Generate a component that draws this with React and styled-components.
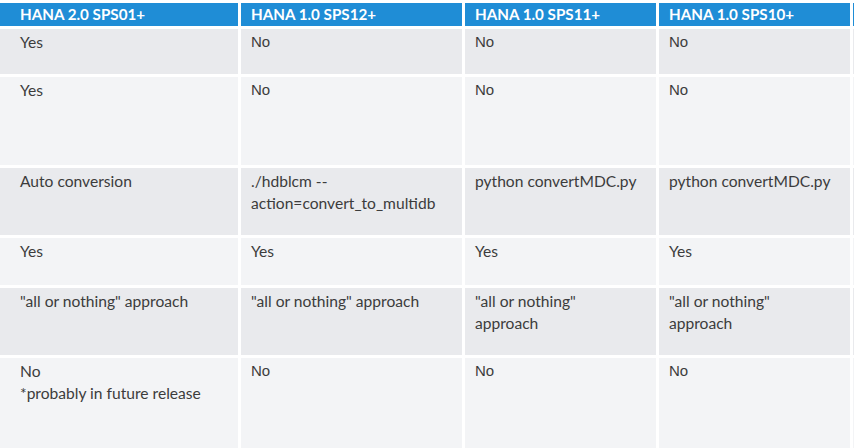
import styled, { createGlobalStyle } from 'styled-components'

const GlobalStyle = createGlobalStyle`
  html, body {
    margin: 0;
    padding: 0;
    background: #ffffff;
  }
`

const Grid = styled.div`
  display: grid;
  grid-template-columns: 7px 228px 221px 191px 191px 1fr;
  grid-template-rows: 23px 45px 88px 67px 47px 67px 90px;
  gap: 3px;
  padding-top: 3px;
  width: 854px;
  height: 448px;
  overflow: hidden;
  box-sizing: border-box;
  font-family: Lato, 'Open Sans', sans-serif;
`

const HeadCell = styled.div`
  background: #1f8dd6;
  color: #ffffff;
  font-weight: bold;
  font-size: 15.2px;
  line-height: 23px;
  padding-left: 10px;
  white-space: nowrap;
  overflow: hidden;
`

const Cell = styled.div`
  background: ${(p) => (p.$odd ? '#e9eaed' : '#f3f4f6')};
  color: #3c3c3c;
  font-family: ${(p) => (p.$arial ? "'Liberation Sans', Arial, sans-serif" : "Lato, 'Open Sans', sans-serif")};
  font-size: ${(p) => (p.$arial ? '15px' : '15.6px')};
  line-height: 22px;
  padding: 2px 6px 0 10px;
  overflow: hidden;
`

const headers = ['', 'HANA 2.0 SPS01+', 'HANA 1.0 SPS12+', 'HANA 1.0 SPS11+', 'HANA 1.0 SPS10+', '']

const A = (text) => ({ text, arial: true })

const rows = [
  ['Yes', A('No'), A('No'), A('No')],
  ['Yes', A('No'), A('No'), A('No')],
  ['Auto conversion', './hdblcm --\naction=convert_to_multidb', 'python convertMDC.py', 'python convertMDC.py'],
  ['Yes', 'Yes', 'Yes', 'Yes'],
  ['"all or nothing" approach', '"all or nothing" approach', '"all or nothing"\napproach', '"all or nothing"\napproach'],
  ['No\n*probably in future release', A('No'), A('No'), A('No')],
]

const Lines = ({ text }) =>
  text.split('\n').map((line, i) => <div key={i}>{line}</div>)

const App = () => {
  return (
    <>
      <GlobalStyle />
      <Grid>
        {headers.map((h, i) => (
          <HeadCell key={`h${i}`}>{h}</HeadCell>
        ))}
        {rows.map((row, r) => {
          const odd = r % 2 === 0
          return [
            <Cell key={`r${r}a`} $odd={odd} />,
            ...row.map((c, i) => {
              const item = typeof c === 'string' ? { text: c } : c
              return (
                <Cell key={`r${r}c${i}`} $odd={odd} $arial={item.arial}>
                  <Lines text={item.text} />
                </Cell>
              )
            }),
            <Cell key={`r${r}z`} $odd={odd} />,
          ]
        })}
      </Grid>
    </>
  )
}

export default App
